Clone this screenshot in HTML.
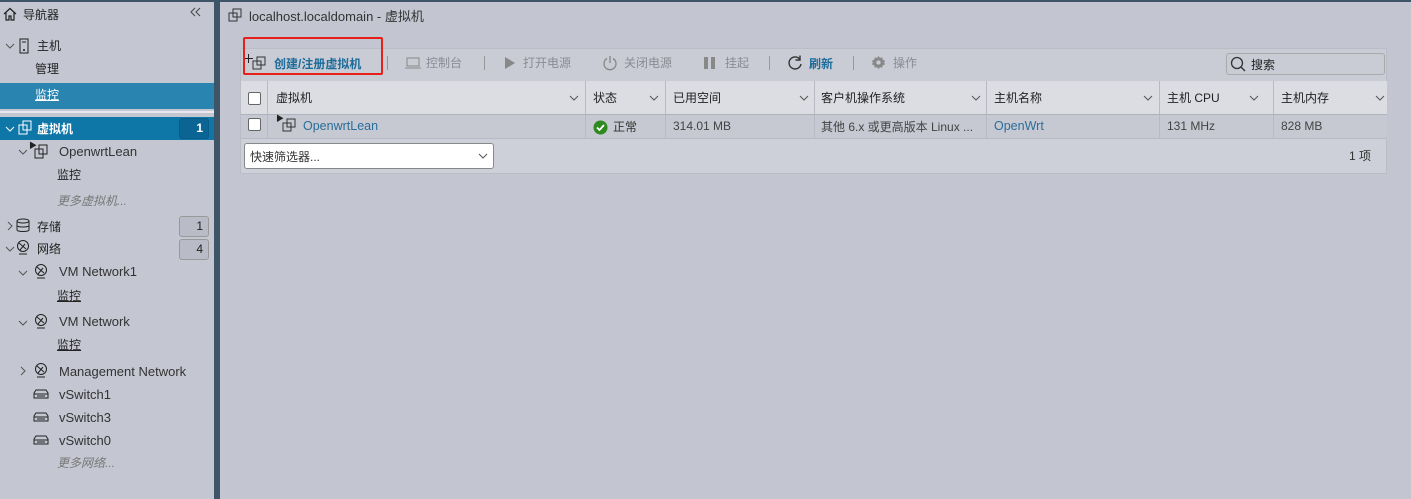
<!DOCTYPE html>
<html><head><meta charset="utf-8"><style>
*{margin:0;padding:0;box-sizing:border-box}
body{width:1411px;height:499px;overflow:hidden;background:#c3c5d0;font-family:"Liberation Sans","Noto Sans CJK SC",sans-serif;font-size:12px;color:#222;position:relative}
.a{position:absolute;white-space:nowrap}
.topbar{left:0;top:0;width:1411px;height:2px;background:#3e5568}
.side{left:0;top:2px;width:214px;height:497px;background:#c4c6d1}
.split{left:214px;top:0;width:6px;height:499px;background:#3e5568}
.main{left:220px;top:2px;width:1191px;height:497px;background:#c3c5d0}
.it{font-style:italic;color:#777}
.badge{position:absolute;left:179px;width:30px;height:21px;border:1px solid #999;border-radius:3px;background:#b9bbc6;text-align:right;padding-right:5px;line-height:19px;font-size:12px}
.card{left:240px;top:48px;width:1147px;height:126px;background:#cdcfd9;border:1px solid #babcc6;border-radius:2px}
.th{top:81px;height:34px;background:#dcdde3;border-bottom:1px solid #b0b2bb;width:1146px;left:241px}
.tr{top:115px;height:24px;background:#c6c8d2;border-bottom:1px solid #b8bac3;width:1146px;left:241px}
.col{position:absolute;top:0;height:100%;border-left:1px solid #b8bac3}
.tool{top:55px;font-size:12px;color:#8a8c94}
.cb{width:13px;height:13px;border:1px solid #666;background:#fff;border-radius:2px}
</style></head><body>
<svg width="0" height="0" style="position:absolute"><defs>
<symbol id="dn" viewBox="0 0 10 6"><path d="M1 1L5 5L9 1" fill="none" stroke="#555" stroke-width="1"/></symbol>
<symbol id="rt" viewBox="0 0 6 10"><path d="M1 1L5 5L1 9" fill="none" stroke="#555" stroke-width="1"/></symbol>
</defs></svg>
<div class="a topbar"></div>
<div class="a side"></div>
<div class="a split"></div>
<div class="a main"></div>

<!-- sidebar -->
<svg class="a" style="left:3px;top:7px" width="14" height="14" viewBox="0 0 14 14"><path d="M1 7L7 1.5 13 7M3 5.5V13H6V9H8V13H11V5.5" fill="none" stroke="#222" stroke-width="1.2"/></svg>
<div class="a" style="left:23px;top:6px;font-size:12px">导航器</div>
<svg class="a" style="left:190px;top:7px" width="12" height="10" viewBox="0 0 12 10"><path d="M5 1L1 5L5 9M10 1L6 5L10 9" fill="none" stroke="#444"/></svg>
<svg class="a" style="left:5px;top:43px" width="10" height="6"><use href="#dn"/></svg>
<svg class="a" style="left:19px;top:38px" width="10" height="16" viewBox="0 0 10 16"><rect x="1" y="1" width="8" height="14" fill="none" stroke="#222"/><path d="M3 4H7" stroke="#222"/><circle cx="5" cy="12" r="1" fill="#222"/></svg>
<div class="a" style="left:37px;top:37px;font-size:12px">主机</div>
<div class="a" style="left:35px;top:60px">管理</div>
<div class="a" style="left:0;top:83px;width:214px;height:26px;background:#2a84b0"></div>
<div class="a" style="left:35px;top:86px;color:#fff;text-decoration:underline">监控</div>
<div class="a" style="left:0;top:111px;width:214px;height:2px;background:#e8e8ee"></div>
<div class="a" style="left:0;top:117px;width:214px;height:23px;background:#0f76a8"></div>
<svg class="a" style="left:5px;top:126px" width="10" height="6"><path d="M1 1L5 5L9 1" fill="none" stroke="#fff"/></svg>
<svg class="a" style="left:18px;top:120px" width="14" height="16" viewBox="0 0 14 16"><rect x="5" y="1" width="8" height="9" fill="none" stroke="#fff"/><rect x="1" y="5" width="8" height="9" fill="none" stroke="#fff"/></svg>
<div class="a" style="left:37px;top:120px;color:#fff;font-weight:bold">虚拟机</div>
<div class="badge" style="top:118px;background:#0b6594;border-color:#0a5a85;color:#fff;font-weight:bold">1</div>
<svg class="a" style="left:18px;top:149px" width="10" height="6"><use href="#dn"/></svg>
<div class="a" style="left:29px;top:140px;font-size:8px">▶</div>
<svg class="a" style="left:34px;top:144px" width="14" height="16" viewBox="0 0 14 16"><rect x="5" y="1" width="8" height="9" fill="none" stroke="#222"/><rect x="1" y="5" width="8" height="9" fill="none" stroke="#222"/></svg>
<div class="a" style="left:59px;top:144px;font-size:13px;color:#333">OpenwrtLean</div>
<div class="a" style="left:57px;top:166px">监控</div>
<div class="a it" style="left:57px;top:192px">更多虚拟机...</div>
<svg class="a" style="left:7px;top:221px" width="6" height="10"><use href="#rt"/></svg>
<svg class="a" style="left:16px;top:218px" width="14" height="15" viewBox="0 0 14 15"><ellipse cx="7" cy="3" rx="6" ry="2" fill="none" stroke="#222"/><path d="M1 3V12C1 14 13 14 13 12V3M1 7.5C1 9.5 13 9.5 13 7.5" fill="none" stroke="#222"/></svg>
<div class="a" style="left:37px;top:218px">存储</div>
<div class="badge" style="top:216px">1</div>
<svg class="a" style="left:5px;top:246px" width="10" height="6"><use href="#dn"/></svg>
<svg class="a" style="left:16px;top:240px" width="14" height="16" viewBox="0 0 14 16"><circle cx="7" cy="6" r="5.5" fill="none" stroke="#222"/><path d="M3 3L10 9M4 10L9 4" stroke="#222"/><path d="M3 14H11" stroke="#222"/></svg>
<div class="a" style="left:37px;top:240px">网络</div>
<div class="badge" style="top:239px">4</div>

<svg class="a" style="left:18px;top:270px" width="10" height="6"><use href="#dn"/></svg>
<svg class="a" style="left:34px;top:264px" width="14" height="16" viewBox="0 0 14 16"><circle cx="7" cy="6" r="5.5" fill="none" stroke="#222"/><path d="M3 3L10 9M4 10L9 4" stroke="#222"/><path d="M3 14H11" stroke="#222"/></svg>
<div class="a" style="left:59px;top:264px;font-size:13px;color:#333">VM Network1</div>
<div class="a" style="left:57px;top:287px;text-decoration:underline">监控</div>
<svg class="a" style="left:18px;top:320px" width="10" height="6"><use href="#dn"/></svg>
<svg class="a" style="left:34px;top:314px" width="14" height="16" viewBox="0 0 14 16"><circle cx="7" cy="6" r="5.5" fill="none" stroke="#222"/><path d="M3 3L10 9M4 10L9 4" stroke="#222"/><path d="M3 14H11" stroke="#222"/></svg>
<div class="a" style="left:59px;top:314px;font-size:13px;color:#333">VM Network</div>
<div class="a" style="left:57px;top:336px;text-decoration:underline">监控</div>
<svg class="a" style="left:20px;top:366px" width="6" height="10"><use href="#rt"/></svg>
<svg class="a" style="left:34px;top:363px" width="14" height="16" viewBox="0 0 14 16"><circle cx="7" cy="6" r="5.5" fill="none" stroke="#222"/><path d="M3 3L10 9M4 10L9 4" stroke="#222"/><path d="M3 14H11" stroke="#222"/></svg>
<div class="a" style="left:59px;top:364px;font-size:13px;color:#333">Management Network</div>
<svg class="a" style="left:33px;top:389px" width="16" height="10" viewBox="0 0 16 10"><path d="M1 9V4L3 1H13L15 4V9ZM1 5H15M4 7H12" fill="none" stroke="#222"/></svg>
<div class="a" style="left:59px;top:387px;font-size:13px;color:#333">vSwitch1</div>
<svg class="a" style="left:33px;top:412px" width="16" height="10" viewBox="0 0 16 10"><path d="M1 9V4L3 1H13L15 4V9ZM1 5H15M4 7H12" fill="none" stroke="#222"/></svg>
<div class="a" style="left:59px;top:410px;font-size:13px;color:#333">vSwitch3</div>
<svg class="a" style="left:33px;top:435px" width="16" height="10" viewBox="0 0 16 10"><path d="M1 9V4L3 1H13L15 4V9ZM1 5H15M4 7H12" fill="none" stroke="#222"/></svg>
<div class="a" style="left:59px;top:433px;font-size:13px;color:#333">vSwitch0</div>
<div class="a it" style="left:57px;top:454px">更多网络...</div>

<!-- main -->
<svg class="a" style="left:228px;top:8px" width="14" height="14" viewBox="0 0 14 14"><rect x="5" y="1" width="8" height="8" fill="none" stroke="#333"/><rect x="1" y="5" width="8" height="8" fill="none" stroke="#333"/></svg>
<div class="a" style="left:249px;top:6px;font-size:13px;color:#333">localhost.localdomain - 虚拟机</div>

<div class="a card"></div>
<div class="a" style="left:241px;top:49px;width:1145px;height:32px;background:#c9cbd5"></div>
<svg class="a" style="left:244px;top:54px" width="9" height="9" viewBox="0 0 9 9"><path d="M4.5 0V9M0 4.5H9" stroke="#222"/></svg>
<svg class="a" style="left:252px;top:56px" width="14" height="14" viewBox="0 0 14 14"><rect x="5" y="1" width="8" height="8" fill="none" stroke="#333"/><rect x="1" y="5" width="8" height="8" fill="none" stroke="#333"/></svg>
<div class="a" style="left:274px;top:55px;color:#1d6c9a;font-weight:bold">创建/注册虚拟机</div>
<div class="a" style="left:243px;top:37px;width:140px;height:38px;border:2px solid #e8201a;border-radius:2px"></div>
<div class="a" style="left:387px;top:56px;width:1px;height:14px;background:#999"></div>
<svg class="a" style="left:405px;top:57px" width="16" height="12" viewBox="0 0 16 12"><rect x="2" y="1" width="12" height="8" fill="none" stroke="#888"/><path d="M0 11H16" stroke="#888"/></svg>
<div class="a tool" style="left:426px;top:54px">控制台</div>
<div class="a" style="left:484px;top:56px;width:1px;height:14px;background:#999"></div>
<svg class="a" style="left:504px;top:56px" width="12" height="14" viewBox="0 0 12 14"><path d="M1 1L11 7L1 13Z" fill="#888"/></svg>
<div class="a tool" style="left:523px;top:54px">打开电源</div>
<svg class="a" style="left:602px;top:55px" width="16" height="16" viewBox="0 0 16 16"><path d="M5 3.5A6 6 0 1 0 11 3.5" fill="none" stroke="#888" stroke-width="1.3"/><path d="M8 1V8" stroke="#888" stroke-width="1.3"/></svg>
<div class="a tool" style="left:624px;top:54px">关闭电源</div>
<div class="a" style="left:704px;top:57px;width:4px;height:12px;background:#888"></div>
<div class="a" style="left:711px;top:57px;width:4px;height:12px;background:#888"></div>
<div class="a tool" style="left:725px;top:54px">挂起</div>
<div class="a" style="left:769px;top:56px;width:1px;height:14px;background:#999"></div>
<svg class="a" style="left:787px;top:55px" width="16" height="16" viewBox="0 0 16 16"><path d="M13 4.5A6 6 0 1 0 14 9" fill="none" stroke="#333" stroke-width="1.4"/><path d="M13 0.5V5H8.5" fill="none" stroke="#333" stroke-width="1.4"/></svg>
<div class="a" style="left:809px;top:55px;color:#1d6c9a;font-weight:bold">刷新</div>
<div class="a" style="left:853px;top:56px;width:1px;height:14px;background:#999"></div>
<svg class="a" style="left:871px;top:55px" width="15" height="15" viewBox="0 0 16 16"><path d="M8 1L9.5 3 12 2.5 12.5 5 15 6 14 8 15 10 12.5 11 12 13.5 9.5 13 8 15 6.5 13 4 13.5 3.5 11 1 10 2 8 1 6 3.5 5 4 2.5 6.5 3Z" fill="#888"/><circle cx="8" cy="8" r="2.3" fill="#c9cbd5"/></svg>
<div class="a tool" style="left:893px;top:54px">操作</div>
<div class="a" style="left:1226px;top:53px;width:159px;height:22px;border:1px solid #aaa;border-radius:3px;background:#c9cbd5"></div>
<svg class="a" style="left:1230px;top:56px" width="16" height="16" viewBox="0 0 16 16"><circle cx="7" cy="7" r="5.5" fill="none" stroke="#333" stroke-width="1.3"/><path d="M11 11L15 15" stroke="#333" stroke-width="1.3"/></svg>
<div class="a" style="left:1251px;top:56px">搜索</div>

<div class="a th">
<div class="a cb" style="left:7px;top:11px"></div>
<div class="col" style="left:26px"></div>
<div class="a" style="left:35px;top:8px">虚拟机</div><svg class="a" style="left:328px;top:14px" width="10" height="6"><use href="#dn"/></svg>
<div class="col" style="left:344px"></div>
<div class="a" style="left:352px;top:8px">状态</div><svg class="a" style="left:408px;top:14px" width="10" height="6"><use href="#dn"/></svg>
<div class="col" style="left:424px"></div>
<div class="a" style="left:432px;top:8px">已用空间</div><svg class="a" style="left:558px;top:14px" width="10" height="6"><use href="#dn"/></svg>
<div class="col" style="left:573px"></div>
<div class="a" style="left:580px;top:8px">客户机操作系统</div><svg class="a" style="left:730px;top:14px" width="10" height="6"><use href="#dn"/></svg>
<div class="col" style="left:745px"></div>
<div class="a" style="left:753px;top:8px">主机名称</div><svg class="a" style="left:902px;top:14px" width="10" height="6"><use href="#dn"/></svg>
<div class="col" style="left:918px"></div>
<div class="a" style="left:926px;top:8px">主机 CPU</div><svg class="a" style="left:1008px;top:14px" width="10" height="6"><use href="#dn"/></svg>
<div class="col" style="left:1032px"></div>
<div class="a" style="left:1040px;top:8px">主机内存</div><svg class="a" style="left:1134px;top:14px" width="10" height="6"><use href="#dn"/></svg>
</div>
<div class="a tr">
<div class="a cb" style="left:7px;top:3px"></div>
<div class="col" style="left:26px"></div>
<div class="a" style="left:35px;top:-2px;font-size:8px">▶</div>
<svg class="a" style="left:41px;top:3px" width="14" height="14" viewBox="0 0 14 14"><rect x="5" y="1" width="8" height="8" fill="none" stroke="#333"/><rect x="1" y="5" width="8" height="8" fill="none" stroke="#333"/></svg>
<div class="a" style="left:62px;top:4px;color:#2a6e9a;font-size:12.5px">OpenwrtLean</div>
<div class="col" style="left:344px"></div>
<svg class="a" style="left:352px;top:5px" width="15" height="15" viewBox="0 0 15 15"><circle cx="7.5" cy="7.5" r="7" fill="#2e8a1e"/><path d="M4 7.5L6.5 10L11 5" fill="none" stroke="#fff" stroke-width="1.8"/></svg>
<div class="a" style="left:372px;top:3px;color:#333">正常</div>
<div class="col" style="left:424px"></div>
<div class="a" style="left:432px;top:4px;color:#444">314.01 MB</div>
<div class="col" style="left:573px"></div>
<div class="a" style="left:580px;top:3px;color:#444">其他 6.x 或更高版本 Linux ...</div>
<div class="col" style="left:745px"></div>
<div class="a" style="left:753px;top:4px;color:#2a6e9a;font-size:12.5px">OpenWrt</div>
<div class="col" style="left:918px"></div>
<div class="a" style="left:926px;top:4px;color:#444">131 MHz</div>
<div class="col" style="left:1032px"></div>
<div class="a" style="left:1040px;top:4px;color:#444">828 MB</div>
</div>
<div class="a" style="left:244px;top:143px;width:250px;height:26px;background:#fff;border:1px solid #888;border-radius:3px"></div>
<div class="a" style="left:250px;top:148px;color:#333">快速筛选器...</div>
<svg class="a" style="left:478px;top:153px" width="10" height="6"><use href="#dn"/></svg>
<div class="a" style="left:1349px;top:147px;color:#333">1 项</div>
</body></html>
